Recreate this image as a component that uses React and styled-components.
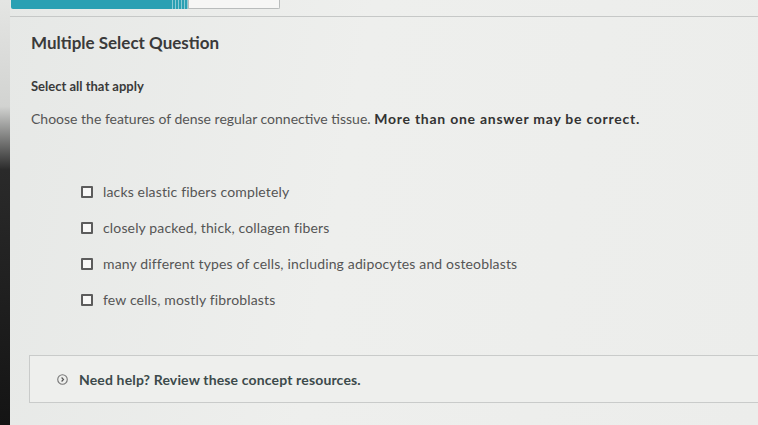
import styled, { createGlobalStyle } from 'styled-components';

const GlobalStyle = createGlobalStyle`
  html, body {
    margin: 0;
    padding: 0;
    background: #ebecea;
  }
  body {
    font-family: Lato, "Open Sans", Arial, sans-serif;
    color: #333;
  }
`;

const options = [
  'lacks elastic fibers completely',
  'closely packed, thick, collagen fibers',
  'many different types of cells, including adipocytes and osteoblasts',
  'few cells, mostly fibroblasts',
];

const App = () => {
  return (
    <Screen>
      <GlobalStyle />
      <Bezel />
      <Main>
        <Progress>
          <Filled />
          <Stripes />
          <Remaining />
        </Progress>
        <Divider />
        <Content>
          <Title>Multiple Select Question</Title>
          <Instruction>Select all that apply</Instruction>
          <Prompt>
            Choose the features of dense regular connective tissue. <strong>More than one answer may be correct.</strong>
          </Prompt>
          <Options>
            {options.map((text) => (
              <Option key={text}>
                <Box type="checkbox" />
                <span>{text}</span>
              </Option>
            ))}
          </Options>
          <Help>
            <HelpIcon>
              <svg width="11" height="11" viewBox="0 0 12 12">
                <circle cx="6" cy="6" r="5.2" fill="none" stroke="#777" strokeWidth="1.2" />
                <path d="M5 3.8 L7.1 6 L5 8.2" fill="none" stroke="#555" strokeWidth="1.3" />
              </svg>
            </HelpIcon>
            Need help? Review these concept resources.
          </Help>
        </Content>
      </Main>
    </Screen>
  );
};

export default App;

const Screen = styled.div`
  width: 758px;
  height: 425px;
  display: flex;
  overflow: hidden;
  background: linear-gradient(100deg, #e6e8e6 0%, #eeefed 45%, #ecedeb 100%);
`;

const Bezel = styled.div`
  width: 10px;
  flex-shrink: 0;
  background: linear-gradient(180deg, #e4e5e3 0%, #d2d3d1 25%, #2a2a2a 40%, #141414 100%);
`;

const Main = styled.div`
  flex: 1;
  display: flex;
  flex-direction: column;
`;

const Progress = styled.div`
  display: flex;
  height: 9px;
  margin-left: 1px;
  width: 269px;
`;

const Filled = styled.div`
  width: 159px;
  background: #2aa0b3;
  border-radius: 0 0 0 2px;
`;

const Stripes = styled.div`
  width: 18px;
  background: repeating-linear-gradient(90deg, #2aa0b3 0 2px, #8ccad4 2px 3px);
`;

const Remaining = styled.div`
  flex: 1;
  background: #f6f6f5;
  border: 1px solid #b9bcbc;
  border-top: none;
  border-radius: 0 0 2px 0;
`;

const Divider = styled.div`
  margin-top: 7px;
  height: 1px;
  background: #c6c8c7;
`;

const Content = styled.div`
  padding-left: 21px;
  display: flex;
  flex-direction: column;
`;

const Title = styled.h1`
  margin: 16px 0 0;
  font-size: 17px;
  line-height: 20px;
  font-weight: 700;
  color: #3a3a3a;
`;

const Instruction = styled.div`
  margin-top: 25px;
  font-size: 13px;
  line-height: 16px;
  font-weight: 700;
  color: #3a3a3a;
`;

const Prompt = styled.p`
  margin: 17px 0 0;
  font-size: 14px;
  line-height: 16px;
  color: #555;

  strong {
    color: #333;
    font-weight: 700;
    letter-spacing: 0.75px;
  }
`;

const Options = styled.div`
  margin-top: 57px;
  padding-left: 50px;
  display: flex;
  flex-direction: column;
  gap: 20px;
`;

const Option = styled.label`
  display: flex;
  align-items: center;
  gap: 10px;
  font-size: 14px;
  line-height: 16px;
  letter-spacing: 0.15px;
  color: #555;
`;

const Box = styled.input`
  appearance: none;
  margin: 0;
  width: 12px;
  height: 12px;
  border: 2px solid #5c5c5c;
  border-radius: 1px;
  background: #f8f8f7;
`;

const Help = styled.div`
  margin-top: 47px;
  margin-left: -2px;
  margin-right: -10px;
  height: 46px;
  border: 1px solid #c9cbca;
  display: flex;
  align-items: center;
  padding-left: 27px;
  gap: 11px;
  font-size: 14px;
  font-weight: 700;
  letter-spacing: 0.15px;
  color: #3c4a4b;
  background: #eeefed;
`;

const HelpIcon = styled.span`
  display: flex;
`;
